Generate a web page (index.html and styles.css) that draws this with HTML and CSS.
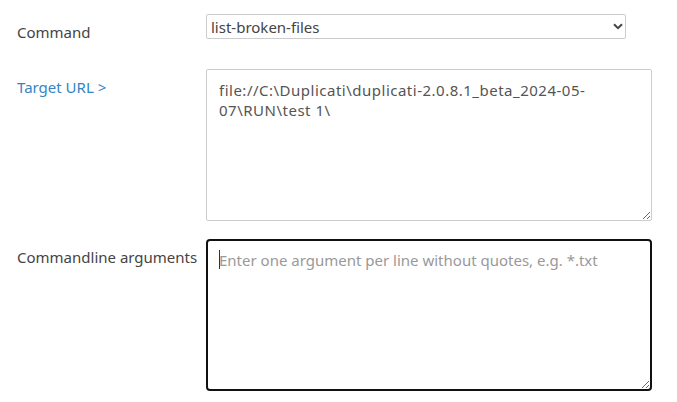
FILE: index.html
```html
<!DOCTYPE html>
<html lang="en">
<head>
<meta charset="utf-8">
<title>Commandline</title>
<link rel="stylesheet" href="styles.css">
</head>
<body>
<form class="form">
  <div class="row row-command">
    <label class="label" for="command">Command</label>
    <div class="field select-wrap">
      <select id="command" class="select">
        <option>list-broken-files</option>
      </select>
      <svg class="chevron" width="10" height="7" viewBox="0 0 10 7"><path d="M1 1.2 L5 5.2 L9 1.2" fill="none" stroke="#444" stroke-width="2"/></svg>
    </div>
  </div>
  <div class="row row-target">
    <a class="label link" href="#">Target URL &gt;</a>
    <div class="field">
      <textarea class="textarea textarea-url">file://C:\Duplicati\duplicati-2.0.8.1_beta_2024-05-07\RUN\test 1\</textarea>
    </div>
  </div>
  <div class="row row-args">
    <label class="label" for="args">Commandline arguments</label>
    <div class="field caret-wrap">
      <textarea id="args" class="textarea textarea-focus" placeholder="Enter one argument per line without quotes, e.g. *.txt"></textarea>
      <span class="caret"></span>
    </div>
  </div>
</form>
</body>
</html>
```

FILE: styles.css
```css
html, body {
  margin: 0;
  padding: 0;
  background: #ffffff;
}

body {
  font-family: "Noto Sans", "Open Sans", sans-serif;
  font-size: 15px;
  line-height: 20px;
  color: #333333;
}

.form {
  padding: 14px 0 0 17px;
}

.row {
  display: grid;
  grid-template-columns: 189px auto;
  align-items: start;
}

.row-target {
  margin-top: 27px;
}

.row-args {
  margin-top: 18px;
}

.label {
  padding-top: 8px;
  color: #444444;
}

.link {
  color: #3385c6;
  text-decoration: none;
}

.field {
  position: relative;
}

.select {
  appearance: none;
  -webkit-appearance: none;
  width: 420px;
  height: 25px;
  box-sizing: border-box;
  border: 1px solid #cccccc;
  border-radius: 2px;
  background: #ffffff;
  padding: 0 24px 0 4px;
  font-family: inherit;
  font-size: 15px;
  color: #444444;
  display: block;
}

.chevron {
  position: absolute;
  left: 407px;
  top: 9px;
  pointer-events: none;
}

.textarea {
  display: block;
  width: 446px;
  height: 152px;
  box-sizing: border-box;
  border: 1px solid #cccccc;
  border-radius: 2px;
  padding: 10px 12px;
  font-family: inherit;
  font-size: 15px;
  line-height: 20px;
  color: #555555;
  background: #ffffff;
  margin: 0;
  resize: vertical;
}

.textarea-url {
  letter-spacing: 0.5px;
}

.textarea::placeholder {
  color: #999999;
}

.textarea-focus {
  border: 2px solid #111111;
  border-radius: 4px;
  padding: 9px 11px;
  outline: none;
}

.caret {
  position: absolute;
  left: 13px;
  top: 11px;
  width: 1px;
  height: 19px;
  background: #333333;
}
```
